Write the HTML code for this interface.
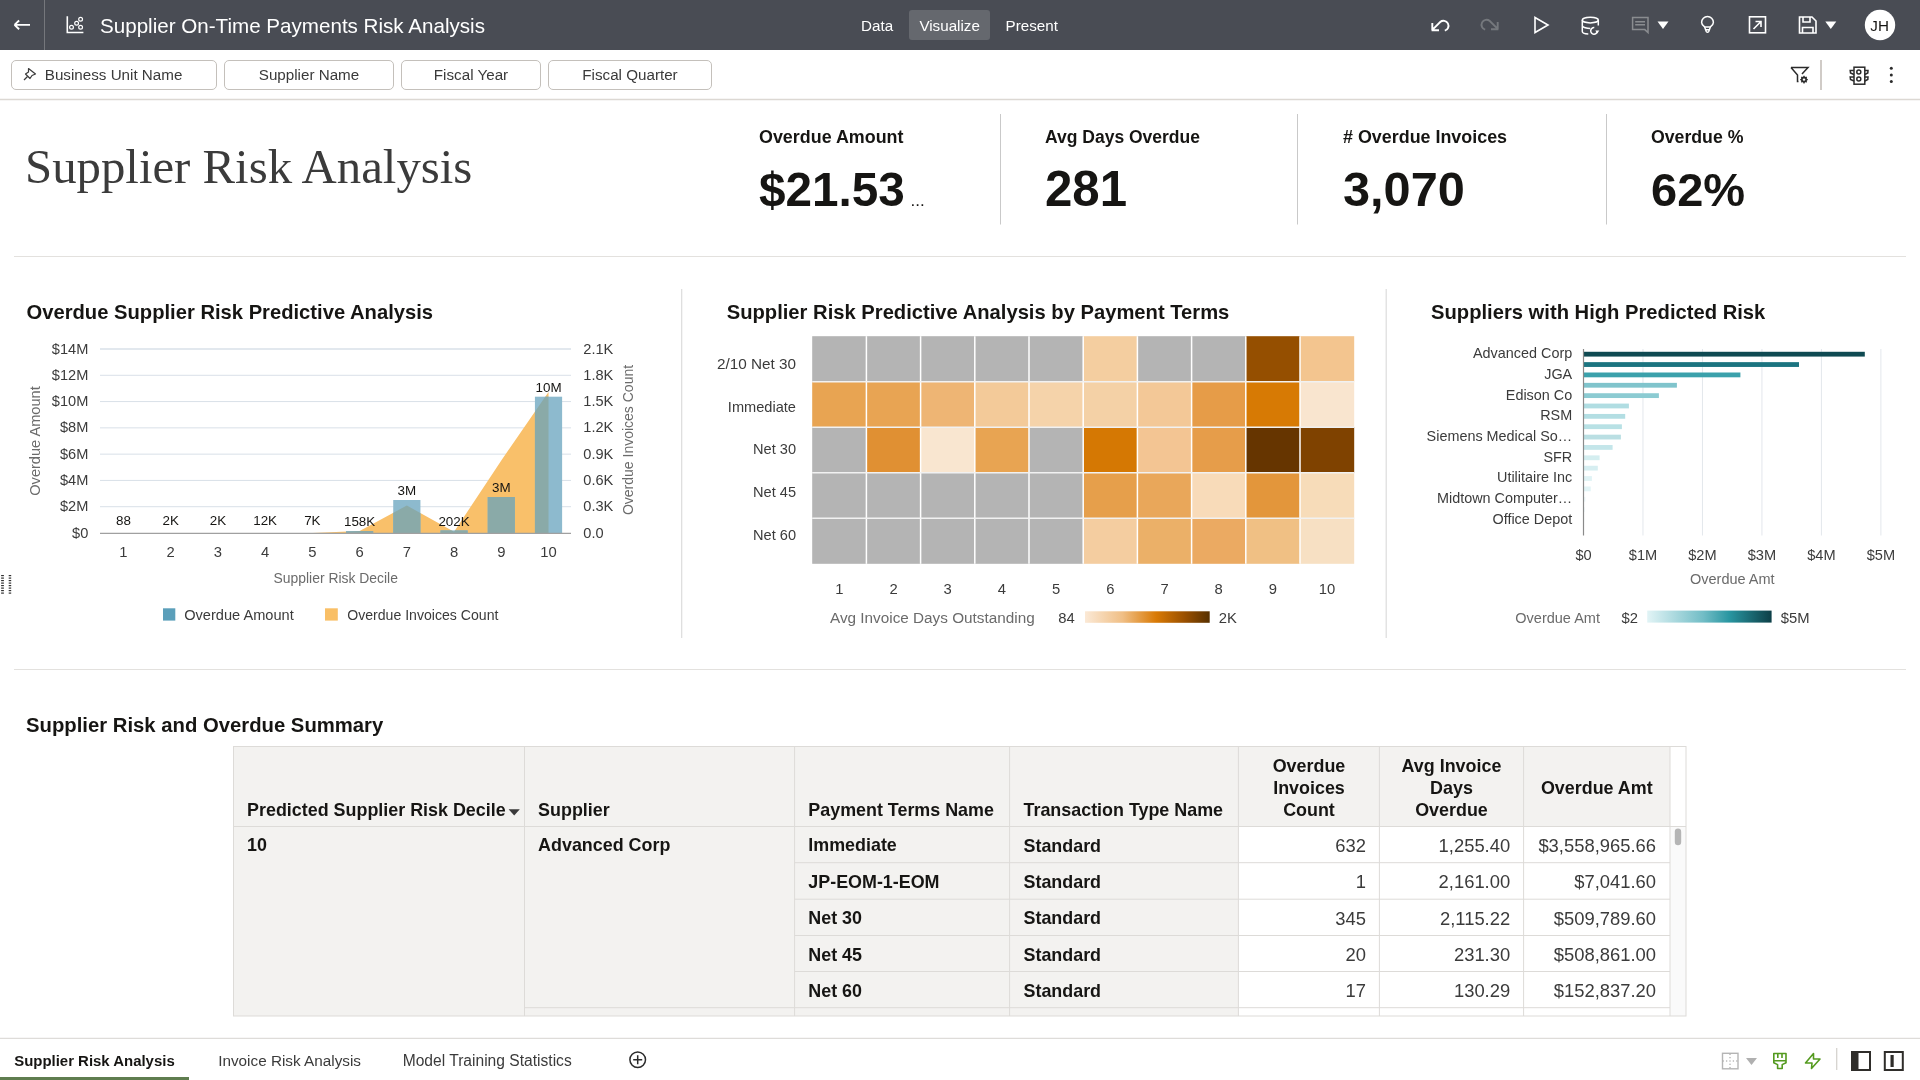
<!DOCTYPE html>
<html><head><meta charset="utf-8"><title>Supplier On-Time Payments Risk Analysis</title>
<style>html,body{margin:0;padding:0;width:1920px;height:1080px;overflow:hidden;background:#fff;font-family:"Liberation Sans",sans-serif;}
svg text{font-family:"Liberation Sans",sans-serif;}</style></head>
<body>
<svg width="1920" height="1080" viewBox="0 0 1920 1080" style="position:absolute;left:0;top:0;display:block;will-change:transform"><rect x="0" y="0" width="1920" height="1080" fill="#ffffff" /><rect x="0" y="0" width="1920" height="50" fill="#494c54" /><line x1="44.5" y1="0" x2="44.5" y2="50" stroke="#75777c" stroke-width="1" /><path d="M14.8 24.9 H30 M14.5 24.9 L19.1 20.5 M14.5 24.9 L19.1 29.3" stroke="#fff" stroke-width="1.9" fill="none" stroke-linecap="butt"/><path d="M67.3 16.3 V32.5 H83.4" stroke="#fff" stroke-width="1.6" fill="none"/><circle cx="71.5" cy="27.2" r="1.9" stroke="#fff" stroke-width="1.2" fill="none"/><circle cx="76.6" cy="23.2" r="1.9" stroke="#fff" stroke-width="1.2" fill="none"/><circle cx="80.6" cy="19.2" r="1.9" stroke="#fff" stroke-width="1.2" fill="none"/><circle cx="80.6" cy="27.2" r="1.9" stroke="#fff" stroke-width="1.2" fill="none"/><text x="100" y="33.3" font-size="20.6" font-weight="400" fill="#ffffff" text-anchor="start" font-family="'Liberation Sans', sans-serif" >Supplier On-Time Payments Risk Analysis</text><rect x="909" y="10" width="81" height="30" fill="#65686e" rx="3"/><text x="861" y="30.6" font-size="15.2" font-weight="400" fill="#ffffff" text-anchor="start" font-family="'Liberation Sans', sans-serif" >Data</text><text x="919.4" y="30.6" font-size="15.2" font-weight="400" fill="#ffffff" text-anchor="start" font-family="'Liberation Sans', sans-serif" >Visualize</text><text x="1005.6" y="30.6" font-size="15.2" font-weight="400" fill="#ffffff" text-anchor="start" font-family="'Liberation Sans', sans-serif" >Present</text><path d="M1444.8 30.6 A5 5 0 1 0 1440.2 22 L1432.6 29.6 M1432.3 30.3 V23 M1431.6 30.3 H1439" stroke="#fff" stroke-width="1.9" fill="none"/><path d="M1485.2 29.6 A5 5 0 1 1 1489.8 21 L1497.4 28.6 M1497.7 29.3 V22 M1498.4 29.3 H1491" stroke="#75787d" stroke-width="1.9" fill="none"/><path d="M1535 17.5 L1548 25 L1535 32.5 Z" stroke="#fff" stroke-width="1.6" fill="none" stroke-linejoin="miter"/><g stroke="#fff" stroke-width="1.5" fill="none" transform="translate(0.3,0.6)"><ellipse cx="1590" cy="19.5" rx="8" ry="2.8"/><path d="M1582 19.5 V31 Q1582 33.3 1588 33.5 M1598 19.5 V25 M1582 25.5 Q1584 27.8 1590 28"/><path d="M1597 30.5 A3.3 3.3 0 1 1 1594 27"/></g><path d="M1595.3 30.6 L1599.3 30.6 L1597.3 33.6 Z" fill="#fff"/><g stroke="#8a8c90" stroke-width="1.5" fill="none"><path d="M1632.6 17.6 H1648 V32.6 L1644.8 29.6 H1632.6 Z"/><path d="M1635.2 21.7 H1645 M1635.2 24.8 H1645"/></g><path d="M1657.5 21.5 H1668.5 L1663 29 Z" fill="#fff"/><g stroke="#fff" stroke-width="1.5" fill="none" stroke-linejoin="round"><path d="M1704.6 26.9 C1702.2 25 1701.6 23.6 1701.6 22.4 A5.9 5.9 0 0 1 1713.4 22.4 C1713.4 23.6 1712.8 25 1710.4 26.9 Z"/><path d="M1704.6 26.9 L1706.3 31.6 Q1707.5 33.1 1708.7 31.6 L1710.4 26.9 M1705.6 29.8 H1709.4"/></g><g stroke="#fff" stroke-width="1.6" fill="none"><rect x="1749.5" y="16.8" width="16" height="16"/><path d="M1753.5 29 L1761 21.5 M1755.5 21.5 H1761 V27"/></g><g stroke="#fff" stroke-width="1.6" fill="none"><path d="M1799.5 17 H1812 L1816 21 V33 H1799.5 Z"/><path d="M1803 17 V22 H1810 V17 M1802.5 33 V27.5 H1813 V33"/></g><path d="M1825.3 21.5 H1836.3 L1830.8 29 Z" fill="#fff"/><circle cx="1880" cy="25" r="15.2" fill="#ffffff"/><text x="1879.6" y="30.7" font-size="15.2" font-weight="400" fill="#161513" text-anchor="middle" font-family="'Liberation Sans', sans-serif" >JH</text><rect x="11.5" y="60.5" width="205" height="29" rx="4.5" fill="#fff" stroke="#c4c0bb" stroke-width="1"/><text x="44.8" y="80.3" font-size="15.2" font-weight="400" fill="#3a3a3a" text-anchor="start" font-family="'Liberation Sans', sans-serif" >Business Unit Name</text><rect x="224.5" y="60.5" width="169" height="29" rx="4.5" fill="#fff" stroke="#c4c0bb" stroke-width="1"/><text x="309.0" y="80.3" font-size="15.2" font-weight="400" fill="#3a3a3a" text-anchor="middle" font-family="'Liberation Sans', sans-serif" >Supplier Name</text><rect x="401.5" y="60.5" width="139" height="29" rx="4.5" fill="#fff" stroke="#c4c0bb" stroke-width="1"/><text x="471.0" y="80.3" font-size="15.2" font-weight="400" fill="#3a3a3a" text-anchor="middle" font-family="'Liberation Sans', sans-serif" >Fiscal Year</text><rect x="548.5" y="60.5" width="163" height="29" rx="4.5" fill="#fff" stroke="#c4c0bb" stroke-width="1"/><text x="630.0" y="80.3" font-size="15.2" font-weight="400" fill="#3a3a3a" text-anchor="middle" font-family="'Liberation Sans', sans-serif" >Fiscal Quarter</text><g stroke="#3a3a3a" stroke-width="1.2" fill="none" stroke-linejoin="round"><path d="M28.5 68.5 L35.5 74 L32 75.5 L30 78.5 L25.5 74 L28.5 72 Z"/><path d="M27.5 76.5 L24 80"/></g><g stroke="#2b2b2b" stroke-width="1.5" fill="none"><path d="M1791 67.5 H1808 L1802 74 M1791 67.5 L1797.5 75 V81.5 L1798.5 81.5"/><circle cx="1804" cy="79.6" r="2.3"/></g><g stroke="#2b2b2b" stroke-width="1.3"><line x1="1804" y1="79.6" x2="1807.8" y2="79.6"/><line x1="1804" y1="79.6" x2="1806.687007551061" y2="82.28700398595551"/><line x1="1804" y1="79.6" x2="1804.0000050418207" y2="83.39999999999665"/><line x1="1804" y1="79.6" x2="1801.3129995791548" y2="82.28701111616186"/><line x1="1804" y1="79.6" x2="1800.2000000000135" y2="79.60001008364121"/><line x1="1804" y1="79.6" x2="1801.312985318742" y2="76.91300314426975"/><line x1="1804" y1="79.6" x2="1803.999984874538" y2="75.8000000000301"/><line x1="1804" y1="79.6" x2="1806.6869932906104" y2="76.9129817536507"/></g><circle cx="1804" cy="79.6" r="1.2" fill="#fff"/><line x1="1821" y1="60" x2="1821" y2="90" stroke="#d0cbc7" stroke-width="2" /><g stroke="#2b2b2b" stroke-width="1.5" fill="none"><rect x="1854" y="67.2" width="10.8" height="17"/><circle cx="1858.8" cy="72" r="2"/><circle cx="1858.8" cy="79" r="2"/><path d="M1854 70.5 L1850.2 70.5 L1850.5 73 L1854 74.5 M1854 77 L1850.2 77 L1850.5 79.5 L1854 81 M1864.8 70.5 L1868 70.5 L1867.8 73 L1864.8 74.5 M1864.8 77 L1868 77 L1867.8 79.5 L1864.8 81"/></g><circle cx="1891.3" cy="68.3" r="1.5" fill="#2b2b2b"/><circle cx="1891.3" cy="75" r="1.5" fill="#2b2b2b"/><circle cx="1891.3" cy="81.6" r="1.5" fill="#2b2b2b"/><line x1="0" y1="99.5" x2="1920" y2="99.5" stroke="#dcd8d3" stroke-width="1.5" /><text x="25" y="182.5" font-size="48.8" font-weight="400" fill="#3b3b3b" text-anchor="start" style="font-family:'Liberation Serif',serif" >Supplier Risk Analysis</text><text x="759" y="143.3" font-size="17.9" font-weight="700" fill="#161513" text-anchor="start" font-family="'Liberation Sans', sans-serif" >Overdue Amount</text><text x="759" y="206.3" font-size="47.7" font-weight="700" fill="#161513" text-anchor="start" font-family="'Liberation Sans', sans-serif" >$21.53</text><text x="1045" y="143.3" font-size="17.5" font-weight="700" fill="#161513" text-anchor="start" font-family="'Liberation Sans', sans-serif" >Avg Days Overdue</text><text x="1045" y="206.3" font-size="49.2" font-weight="700" fill="#161513" text-anchor="start" font-family="'Liberation Sans', sans-serif" >281</text><text x="1343" y="143.3" font-size="17.9" font-weight="700" fill="#161513" text-anchor="start" font-family="'Liberation Sans', sans-serif" ># Overdue Invoices</text><text x="1343" y="206.3" font-size="48.7" font-weight="700" fill="#161513" text-anchor="start" font-family="'Liberation Sans', sans-serif" >3,070</text><text x="1651" y="143.3" font-size="17.7" font-weight="700" fill="#161513" text-anchor="start" font-family="'Liberation Sans', sans-serif" >Overdue %</text><text x="1651" y="206.3" font-size="47.0" font-weight="700" fill="#161513" text-anchor="start" font-family="'Liberation Sans', sans-serif" >62%</text><text x="910.5" y="206.3" font-size="17" font-weight="400" fill="#161513" text-anchor="start" font-family="'Liberation Sans', sans-serif" >...</text><line x1="1000.5" y1="114" x2="1000.5" y2="224.5" stroke="#c9c9c9" stroke-width="1" /><line x1="1297.5" y1="114" x2="1297.5" y2="224.5" stroke="#c9c9c9" stroke-width="1" /><line x1="1606.5" y1="114" x2="1606.5" y2="224.5" stroke="#c9c9c9" stroke-width="1" /><line x1="14" y1="256.5" x2="1906" y2="256.5" stroke="#e3e1de" stroke-width="1.2" /><text x="26.5" y="319.2" font-size="20.2" font-weight="700" fill="#161513" text-anchor="start" font-family="'Liberation Sans', sans-serif" >Overdue Supplier Risk Predictive Analysis</text><text x="88.3" y="537.6" font-size="14.6" font-weight="400" fill="#3b3b3b" text-anchor="end" font-family="'Liberation Sans', sans-serif" >$0</text><text x="583.3" y="537.6" font-size="14.6" font-weight="400" fill="#3b3b3b" text-anchor="start" font-family="'Liberation Sans', sans-serif" >0.0</text><line x1="100" y1="506.7142857142857" x2="571" y2="506.7142857142857" stroke="#d9e0e8" stroke-width="1" /><text x="88.3" y="511.31428571428575" font-size="14.6" font-weight="400" fill="#3b3b3b" text-anchor="end" font-family="'Liberation Sans', sans-serif" >$2M</text><text x="583.3" y="511.31428571428575" font-size="14.6" font-weight="400" fill="#3b3b3b" text-anchor="start" font-family="'Liberation Sans', sans-serif" >0.3K</text><line x1="100" y1="480.42857142857144" x2="571" y2="480.42857142857144" stroke="#d9e0e8" stroke-width="1" /><text x="88.3" y="485.02857142857147" font-size="14.6" font-weight="400" fill="#3b3b3b" text-anchor="end" font-family="'Liberation Sans', sans-serif" >$4M</text><text x="583.3" y="485.02857142857147" font-size="14.6" font-weight="400" fill="#3b3b3b" text-anchor="start" font-family="'Liberation Sans', sans-serif" >0.6K</text><line x1="100" y1="454.1428571428571" x2="571" y2="454.1428571428571" stroke="#d9e0e8" stroke-width="1" /><text x="88.3" y="458.74285714285713" font-size="14.6" font-weight="400" fill="#3b3b3b" text-anchor="end" font-family="'Liberation Sans', sans-serif" >$6M</text><text x="583.3" y="458.74285714285713" font-size="14.6" font-weight="400" fill="#3b3b3b" text-anchor="start" font-family="'Liberation Sans', sans-serif" >0.9K</text><line x1="100" y1="427.8571428571429" x2="571" y2="427.8571428571429" stroke="#d9e0e8" stroke-width="1" /><text x="88.3" y="432.4571428571429" font-size="14.6" font-weight="400" fill="#3b3b3b" text-anchor="end" font-family="'Liberation Sans', sans-serif" >$8M</text><text x="583.3" y="432.4571428571429" font-size="14.6" font-weight="400" fill="#3b3b3b" text-anchor="start" font-family="'Liberation Sans', sans-serif" >1.2K</text><line x1="100" y1="401.57142857142856" x2="571" y2="401.57142857142856" stroke="#d9e0e8" stroke-width="1" /><text x="88.3" y="406.1714285714286" font-size="14.6" font-weight="400" fill="#3b3b3b" text-anchor="end" font-family="'Liberation Sans', sans-serif" >$10M</text><text x="583.3" y="406.1714285714286" font-size="14.6" font-weight="400" fill="#3b3b3b" text-anchor="start" font-family="'Liberation Sans', sans-serif" >1.5K</text><line x1="100" y1="375.2857142857143" x2="571" y2="375.2857142857143" stroke="#d9e0e8" stroke-width="1" /><text x="88.3" y="379.8857142857143" font-size="14.6" font-weight="400" fill="#3b3b3b" text-anchor="end" font-family="'Liberation Sans', sans-serif" >$12M</text><text x="583.3" y="379.8857142857143" font-size="14.6" font-weight="400" fill="#3b3b3b" text-anchor="start" font-family="'Liberation Sans', sans-serif" >1.8K</text><line x1="100" y1="349.0" x2="571" y2="349.0" stroke="#d9e0e8" stroke-width="1.3" /><text x="88.3" y="353.6" font-size="14.6" font-weight="400" fill="#3b3b3b" text-anchor="end" font-family="'Liberation Sans', sans-serif" >$14M</text><text x="583.3" y="353.6" font-size="14.6" font-weight="400" fill="#3b3b3b" text-anchor="start" font-family="'Liberation Sans', sans-serif" >2.1K</text><defs><clipPath id="areaclip"><polygon points="100.00,533.00 123.45,533.00 170.68,533.00 217.91,533.00 265.14,533.00 312.37,533.00 359.60,531.00 406.83,505.50 454.06,531.80 501.29,460.50 548.52,392.00 548.52,533.00"/></clipPath></defs><polygon points="100.00,533.00 123.45,533.00 170.68,533.00 217.91,533.00 265.14,533.00 312.37,533.00 359.60,531.00 406.83,505.50 454.06,531.80 501.29,460.50 548.52,392.00 548.52,533.00" fill="#f9c06a"/><g fill="#8dbace"><rect x="346.00" y="531" width="27.2" height="2.00"/><rect x="393.23" y="500" width="27.2" height="33.00"/><rect x="440.46" y="530.4" width="27.2" height="2.60"/><rect x="487.69" y="497" width="27.2" height="36.00"/><rect x="534.92" y="396.7" width="27.2" height="136.30"/></g><g fill="#8aaaa8" clip-path="url(#areaclip)"><rect x="346.00" y="531" width="27.2" height="2.00"/><rect x="393.23" y="500" width="27.2" height="33.00"/><rect x="440.46" y="530.4" width="27.2" height="2.60"/><rect x="487.69" y="497" width="27.2" height="36.00"/><rect x="534.92" y="396.7" width="27.2" height="136.30"/></g><line x1="100" y1="533.3" x2="571" y2="533.3" stroke="#a0a0a0" stroke-width="1.3" /><text x="123.45" y="525" font-size="13.4" font-weight="400" fill="#161513" text-anchor="middle" font-family="'Liberation Sans', sans-serif" >88</text><text x="123.45" y="556.7" font-size="14.8" font-weight="400" fill="#3b3b3b" text-anchor="middle" font-family="'Liberation Sans', sans-serif" >1</text><text x="170.68" y="525" font-size="13.4" font-weight="400" fill="#161513" text-anchor="middle" font-family="'Liberation Sans', sans-serif" >2K</text><text x="170.68" y="556.7" font-size="14.8" font-weight="400" fill="#3b3b3b" text-anchor="middle" font-family="'Liberation Sans', sans-serif" >2</text><text x="217.91" y="525" font-size="13.4" font-weight="400" fill="#161513" text-anchor="middle" font-family="'Liberation Sans', sans-serif" >2K</text><text x="217.91" y="556.7" font-size="14.8" font-weight="400" fill="#3b3b3b" text-anchor="middle" font-family="'Liberation Sans', sans-serif" >3</text><text x="265.14" y="525" font-size="13.4" font-weight="400" fill="#161513" text-anchor="middle" font-family="'Liberation Sans', sans-serif" >12K</text><text x="265.14" y="556.7" font-size="14.8" font-weight="400" fill="#3b3b3b" text-anchor="middle" font-family="'Liberation Sans', sans-serif" >4</text><text x="312.37" y="525" font-size="13.4" font-weight="400" fill="#161513" text-anchor="middle" font-family="'Liberation Sans', sans-serif" >7K</text><text x="312.37" y="556.7" font-size="14.8" font-weight="400" fill="#3b3b3b" text-anchor="middle" font-family="'Liberation Sans', sans-serif" >5</text><text x="359.59999999999997" y="525.6" font-size="13.4" font-weight="400" fill="#161513" text-anchor="middle" font-family="'Liberation Sans', sans-serif" >158K</text><text x="359.59999999999997" y="556.7" font-size="14.8" font-weight="400" fill="#3b3b3b" text-anchor="middle" font-family="'Liberation Sans', sans-serif" >6</text><text x="406.83" y="495" font-size="13.4" font-weight="400" fill="#161513" text-anchor="middle" font-family="'Liberation Sans', sans-serif" >3M</text><text x="406.83" y="556.7" font-size="14.8" font-weight="400" fill="#3b3b3b" text-anchor="middle" font-family="'Liberation Sans', sans-serif" >7</text><text x="454.05999999999995" y="525.6" font-size="13.4" font-weight="400" fill="#161513" text-anchor="middle" font-family="'Liberation Sans', sans-serif" >202K</text><text x="454.05999999999995" y="556.7" font-size="14.8" font-weight="400" fill="#3b3b3b" text-anchor="middle" font-family="'Liberation Sans', sans-serif" >8</text><text x="501.28999999999996" y="492" font-size="13.4" font-weight="400" fill="#161513" text-anchor="middle" font-family="'Liberation Sans', sans-serif" >3M</text><text x="501.28999999999996" y="556.7" font-size="14.8" font-weight="400" fill="#3b3b3b" text-anchor="middle" font-family="'Liberation Sans', sans-serif" >9</text><text x="548.52" y="392" font-size="13.4" font-weight="400" fill="#161513" text-anchor="middle" font-family="'Liberation Sans', sans-serif" >10M</text><text x="548.52" y="556.7" font-size="14.8" font-weight="400" fill="#3b3b3b" text-anchor="middle" font-family="'Liberation Sans', sans-serif" >10</text><text x="0" y="0" font-size="14.6" font-weight="400" fill="#6b6b6b" text-anchor="middle" font-family="'Liberation Sans', sans-serif" transform="translate(39.6 441) rotate(-90)">Overdue Amount</text><text x="0" y="0" font-size="14" font-weight="400" fill="#6b6b6b" text-anchor="middle" font-family="'Liberation Sans', sans-serif" transform="translate(633.3 440) rotate(-90)">Overdue Invoices Count</text><text x="273.6" y="582.5" font-size="13.9" font-weight="400" fill="#6b6b6b" text-anchor="start" font-family="'Liberation Sans', sans-serif" >Supplier Risk Decile</text><rect x="163" y="608.3" width="12.3" height="12.3" fill="#5b9fba" /><text x="184.2" y="620.4" font-size="14.6" font-weight="400" fill="#3b3b3b" text-anchor="start" font-family="'Liberation Sans', sans-serif" >Overdue Amount</text><rect x="325" y="608.3" width="12.8" height="12.3" fill="#f9bf66" /><text x="347.2" y="620.4" font-size="14.1" font-weight="400" fill="#3b3b3b" text-anchor="start" font-family="'Liberation Sans', sans-serif" >Overdue Invoices Count</text><rect x="1.1" y="575.0" width="2.8" height="1.2" fill="#333" /><rect x="8.7" y="575.0" width="2.5" height="1.2" fill="#333" /><rect x="1.1" y="577.5" width="2.8" height="1.2" fill="#333" /><rect x="8.7" y="577.5" width="2.5" height="1.2" fill="#333" /><rect x="1.1" y="580.0" width="2.8" height="1.2" fill="#333" /><rect x="8.7" y="580.0" width="2.5" height="1.2" fill="#333" /><rect x="1.1" y="582.5" width="2.8" height="1.2" fill="#333" /><rect x="8.7" y="582.5" width="2.5" height="1.2" fill="#333" /><rect x="1.1" y="585.0" width="2.8" height="1.2" fill="#333" /><rect x="8.7" y="585.0" width="2.5" height="1.2" fill="#333" /><rect x="1.1" y="587.5" width="2.8" height="1.2" fill="#333" /><rect x="8.7" y="587.5" width="2.5" height="1.2" fill="#333" /><rect x="1.1" y="590.0" width="2.8" height="1.2" fill="#333" /><rect x="8.7" y="590.0" width="2.5" height="1.2" fill="#333" /><rect x="1.1" y="592.5" width="2.8" height="1.2" fill="#333" /><rect x="8.7" y="592.5" width="2.5" height="1.2" fill="#333" /><line x1="681.7" y1="289" x2="681.7" y2="638" stroke="#dcdcdc" stroke-width="1.2" /><line x1="1386.2" y1="289" x2="1386.2" y2="638" stroke="#dcdcdc" stroke-width="1.2" /><text x="726.7" y="319.2" font-size="20.2" font-weight="700" fill="#161513" text-anchor="start" font-family="'Liberation Sans', sans-serif" >Supplier Risk Predictive Analysis by Payment Terms</text><rect x="812.20" y="336.20" width="54.20" height="45.52" fill="#b4b4b4" /><rect x="866.40" y="336.20" width="54.20" height="45.52" fill="#b4b4b4" /><rect x="920.60" y="336.20" width="54.20" height="45.52" fill="#b4b4b4" /><rect x="974.80" y="336.20" width="54.20" height="45.52" fill="#b4b4b4" /><rect x="1029.00" y="336.20" width="54.20" height="45.52" fill="#b4b4b4" /><rect x="1083.20" y="336.20" width="54.20" height="45.52" fill="#f4cea0" /><rect x="1137.40" y="336.20" width="54.20" height="45.52" fill="#b4b4b4" /><rect x="1191.60" y="336.20" width="54.20" height="45.52" fill="#b4b4b4" /><rect x="1245.80" y="336.20" width="54.20" height="45.52" fill="#954f00" /><rect x="1300.00" y="336.20" width="54.20" height="45.52" fill="#f3c58f" /><rect x="812.20" y="381.72" width="54.20" height="45.52" fill="#e8a452" /><rect x="866.40" y="381.72" width="54.20" height="45.52" fill="#e8a453" /><rect x="920.60" y="381.72" width="54.20" height="45.52" fill="#eeb574" /><rect x="974.80" y="381.72" width="54.20" height="45.52" fill="#f3ca99" /><rect x="1029.00" y="381.72" width="54.20" height="45.52" fill="#f5d3aa" /><rect x="1083.20" y="381.72" width="54.20" height="45.52" fill="#f4d1a6" /><rect x="1137.40" y="381.72" width="54.20" height="45.52" fill="#f3c897" /><rect x="1191.60" y="381.72" width="54.20" height="45.52" fill="#e69c48" /><rect x="1245.80" y="381.72" width="54.20" height="45.52" fill="#d77a04" /><rect x="1300.00" y="381.72" width="54.20" height="45.52" fill="#f9e5cf" /><rect x="812.20" y="427.24" width="54.20" height="45.52" fill="#b4b4b4" /><rect x="866.40" y="427.24" width="54.20" height="45.52" fill="#e09033" /><rect x="920.60" y="427.24" width="54.20" height="45.52" fill="#f9e6d0" /><rect x="974.80" y="427.24" width="54.20" height="45.52" fill="#e8a452" /><rect x="1029.00" y="427.24" width="54.20" height="45.52" fill="#b4b4b4" /><rect x="1083.20" y="427.24" width="54.20" height="45.52" fill="#d57803" /><rect x="1137.40" y="427.24" width="54.20" height="45.52" fill="#f3c593" /><rect x="1191.60" y="427.24" width="54.20" height="45.52" fill="#e69d4a" /><rect x="1245.80" y="427.24" width="54.20" height="45.52" fill="#663500" /><rect x="1300.00" y="427.24" width="54.20" height="45.52" fill="#7f4200" /><rect x="812.20" y="472.76" width="54.20" height="45.52" fill="#b4b4b4" /><rect x="866.40" y="472.76" width="54.20" height="45.52" fill="#b4b4b4" /><rect x="920.60" y="472.76" width="54.20" height="45.52" fill="#b4b4b4" /><rect x="974.80" y="472.76" width="54.20" height="45.52" fill="#b4b4b4" /><rect x="1029.00" y="472.76" width="54.20" height="45.52" fill="#b4b4b4" /><rect x="1083.20" y="472.76" width="54.20" height="45.52" fill="#e69f4b" /><rect x="1137.40" y="472.76" width="54.20" height="45.52" fill="#e9a75a" /><rect x="1191.60" y="472.76" width="54.20" height="45.52" fill="#f8dbb9" /><rect x="1245.80" y="472.76" width="54.20" height="45.52" fill="#e3963b" /><rect x="1300.00" y="472.76" width="54.20" height="45.52" fill="#f7dcb9" /><rect x="812.20" y="518.28" width="54.20" height="45.52" fill="#b4b4b4" /><rect x="866.40" y="518.28" width="54.20" height="45.52" fill="#b4b4b4" /><rect x="920.60" y="518.28" width="54.20" height="45.52" fill="#b4b4b4" /><rect x="974.80" y="518.28" width="54.20" height="45.52" fill="#b4b4b4" /><rect x="1029.00" y="518.28" width="54.20" height="45.52" fill="#b4b4b4" /><rect x="1083.20" y="518.28" width="54.20" height="45.52" fill="#f4cda0" /><rect x="1137.40" y="518.28" width="54.20" height="45.52" fill="#ebb068" /><rect x="1191.60" y="518.28" width="54.20" height="45.52" fill="#ebaa62" /><rect x="1245.80" y="518.28" width="54.20" height="45.52" fill="#f0c084" /><rect x="1300.00" y="518.28" width="54.20" height="45.52" fill="#f7e0c3" /><line x1="866.40" y1="336.2" x2="866.40" y2="563.8" stroke="#ffffff" stroke-width="1.5" /><line x1="920.60" y1="336.2" x2="920.60" y2="563.8" stroke="#ffffff" stroke-width="1.5" /><line x1="974.80" y1="336.2" x2="974.80" y2="563.8" stroke="#ffffff" stroke-width="1.5" /><line x1="1029.00" y1="336.2" x2="1029.00" y2="563.8" stroke="#ffffff" stroke-width="1.5" /><line x1="1083.20" y1="336.2" x2="1083.20" y2="563.8" stroke="#ffffff" stroke-width="1.5" /><line x1="1137.40" y1="336.2" x2="1137.40" y2="563.8" stroke="#ffffff" stroke-width="1.5" /><line x1="1191.60" y1="336.2" x2="1191.60" y2="563.8" stroke="#ffffff" stroke-width="1.5" /><line x1="1245.80" y1="336.2" x2="1245.80" y2="563.8" stroke="#ffffff" stroke-width="1.5" /><line x1="1300.00" y1="336.2" x2="1300.00" y2="563.8" stroke="#ffffff" stroke-width="1.5" /><line x1="812.2" y1="381.72" x2="1354.2" y2="381.72" stroke="#f1f1f1" stroke-width="1.6" /><line x1="812.2" y1="427.24" x2="1354.2" y2="427.24" stroke="#f1f1f1" stroke-width="1.6" /><line x1="812.2" y1="472.76" x2="1354.2" y2="472.76" stroke="#f1f1f1" stroke-width="1.6" /><line x1="812.2" y1="518.28" x2="1354.2" y2="518.28" stroke="#f1f1f1" stroke-width="1.6" /><text x="796" y="369.3" font-size="15.3" font-weight="400" fill="#3b3b3b" text-anchor="end" font-family="'Liberation Sans', sans-serif" >2/10 Net 30</text><text x="796" y="412.2" font-size="14.6" font-weight="400" fill="#3b3b3b" text-anchor="end" font-family="'Liberation Sans', sans-serif" >Immediate</text><text x="796" y="453.8" font-size="14.6" font-weight="400" fill="#3b3b3b" text-anchor="end" font-family="'Liberation Sans', sans-serif" >Net 30</text><text x="796" y="496.7" font-size="14.6" font-weight="400" fill="#3b3b3b" text-anchor="end" font-family="'Liberation Sans', sans-serif" >Net 45</text><text x="796" y="540" font-size="14.6" font-weight="400" fill="#3b3b3b" text-anchor="end" font-family="'Liberation Sans', sans-serif" >Net 60</text><text x="839.30" y="594.2" font-size="14.8" font-weight="400" fill="#3b3b3b" text-anchor="middle" font-family="'Liberation Sans', sans-serif" >1</text><text x="893.50" y="594.2" font-size="14.8" font-weight="400" fill="#3b3b3b" text-anchor="middle" font-family="'Liberation Sans', sans-serif" >2</text><text x="947.70" y="594.2" font-size="14.8" font-weight="400" fill="#3b3b3b" text-anchor="middle" font-family="'Liberation Sans', sans-serif" >3</text><text x="1001.90" y="594.2" font-size="14.8" font-weight="400" fill="#3b3b3b" text-anchor="middle" font-family="'Liberation Sans', sans-serif" >4</text><text x="1056.10" y="594.2" font-size="14.8" font-weight="400" fill="#3b3b3b" text-anchor="middle" font-family="'Liberation Sans', sans-serif" >5</text><text x="1110.30" y="594.2" font-size="14.8" font-weight="400" fill="#3b3b3b" text-anchor="middle" font-family="'Liberation Sans', sans-serif" >6</text><text x="1164.50" y="594.2" font-size="14.8" font-weight="400" fill="#3b3b3b" text-anchor="middle" font-family="'Liberation Sans', sans-serif" >7</text><text x="1218.70" y="594.2" font-size="14.8" font-weight="400" fill="#3b3b3b" text-anchor="middle" font-family="'Liberation Sans', sans-serif" >8</text><text x="1272.90" y="594.2" font-size="14.8" font-weight="400" fill="#3b3b3b" text-anchor="middle" font-family="'Liberation Sans', sans-serif" >9</text><text x="1327.10" y="594.2" font-size="14.8" font-weight="400" fill="#3b3b3b" text-anchor="middle" font-family="'Liberation Sans', sans-serif" >10</text><text x="830" y="622.5" font-size="15.3" font-weight="400" fill="#6b6b6b" text-anchor="start" font-family="'Liberation Sans', sans-serif" >Avg Invoice Days Outstanding</text><text x="1058.3" y="622.8" font-size="14.8" font-weight="400" fill="#3b3b3b" text-anchor="start" font-family="'Liberation Sans', sans-serif" >84</text><defs><linearGradient id="hg" x1="0" x2="1" y1="0" y2="0"><stop offset="0" stop-color="#fbe9d6"/><stop offset="0.3" stop-color="#f0bf86"/><stop offset="0.57" stop-color="#d97a05"/><stop offset="0.8" stop-color="#9a5000"/><stop offset="1" stop-color="#573000"/></linearGradient></defs><rect x="1085" y="611.3" width="124.7" height="11.5" fill="url(#hg)" /><text x="1218.8" y="622.8" font-size="14.8" font-weight="400" fill="#3b3b3b" text-anchor="start" font-family="'Liberation Sans', sans-serif" >2K</text><text x="1431" y="319.2" font-size="20.2" font-weight="700" fill="#161513" text-anchor="start" font-family="'Liberation Sans', sans-serif" >Suppliers with High Predicted Risk</text><line x1="1642.98" y1="349" x2="1642.98" y2="535.5" stroke="#e3e7ec" stroke-width="1" /><line x1="1702.46" y1="349" x2="1702.46" y2="535.5" stroke="#e3e7ec" stroke-width="1" /><line x1="1761.94" y1="349" x2="1761.94" y2="535.5" stroke="#e3e7ec" stroke-width="1" /><line x1="1821.42" y1="349" x2="1821.42" y2="535.5" stroke="#e3e7ec" stroke-width="1" /><line x1="1880.90" y1="349" x2="1880.90" y2="535.5" stroke="#e3e7ec" stroke-width="1" /><rect x="1583.5" y="351.78" width="281.30" height="4.8" fill="#0f4a52" /><rect x="1583.5" y="362.14" width="215.50" height="4.8" fill="#1b7480" /><rect x="1583.5" y="372.50" width="156.90" height="4.8" fill="#3ba1ab" /><rect x="1583.5" y="382.86" width="93.40" height="4.8" fill="#80c4cc" /><rect x="1583.5" y="393.23" width="75.40" height="4.8" fill="#8ccbd2" /><rect x="1583.5" y="403.59" width="45.40" height="4.8" fill="#b0dde2" /><rect x="1583.5" y="413.95" width="41.70" height="4.8" fill="#b3dee3" /><rect x="1583.5" y="424.31" width="38.40" height="4.8" fill="#b8e1e5" /><rect x="1583.5" y="434.67" width="37.40" height="4.8" fill="#badfe3" /><rect x="1583.5" y="445.03" width="29.10" height="4.8" fill="#c4e6ea" /><rect x="1583.5" y="455.39" width="16.10" height="4.8" fill="#d4eef0" /><rect x="1583.5" y="465.75" width="14.30" height="4.8" fill="#d6eef1" /><rect x="1583.5" y="476.11" width="8.40" height="4.8" fill="#e0f3f5" /><rect x="1583.5" y="486.48" width="7.20" height="4.8" fill="#e2f4f6" /><rect x="1583.5" y="496.84" width="1.90" height="4.8" fill="#eef8f9" /><rect x="1583.5" y="507.20" width="1.30" height="4.8" fill="#f0f9fa" /><rect x="1583.5" y="517.56" width="0.70" height="4.8" fill="#f2fafb" /><rect x="1583.5" y="527.92" width="0.50" height="4.8" fill="#f2fafb" /><line x1="1583.5" y1="349" x2="1583.5" y2="535.5" stroke="#8a8a8a" stroke-width="1.2" /><text x="1572.2" y="358.08" font-size="14.4" font-weight="400" fill="#3b3b3b" text-anchor="end" font-family="'Liberation Sans', sans-serif" >Advanced Corp</text><text x="1572.2" y="378.80" font-size="14.4" font-weight="400" fill="#3b3b3b" text-anchor="end" font-family="'Liberation Sans', sans-serif" >JGA</text><text x="1572.2" y="399.52" font-size="14.4" font-weight="400" fill="#3b3b3b" text-anchor="end" font-family="'Liberation Sans', sans-serif" >Edison Co</text><text x="1572.2" y="420.25" font-size="14.4" font-weight="400" fill="#3b3b3b" text-anchor="end" font-family="'Liberation Sans', sans-serif" >RSM</text><text x="1572.2" y="440.97" font-size="14.4" font-weight="400" fill="#3b3b3b" text-anchor="end" font-family="'Liberation Sans', sans-serif" >Siemens Medical So…</text><text x="1572.2" y="461.69" font-size="14.4" font-weight="400" fill="#3b3b3b" text-anchor="end" font-family="'Liberation Sans', sans-serif" >SFR</text><text x="1572.2" y="482.41" font-size="14.4" font-weight="400" fill="#3b3b3b" text-anchor="end" font-family="'Liberation Sans', sans-serif" >Utilitaire Inc</text><text x="1572.2" y="503.14" font-size="14.4" font-weight="400" fill="#3b3b3b" text-anchor="end" font-family="'Liberation Sans', sans-serif" >Midtown Computer…</text><text x="1572.2" y="523.86" font-size="14.4" font-weight="400" fill="#3b3b3b" text-anchor="end" font-family="'Liberation Sans', sans-serif" >Office Depot</text><text x="1583.50" y="560.2" font-size="14.6" font-weight="400" fill="#3b3b3b" text-anchor="middle" font-family="'Liberation Sans', sans-serif" >$0</text><text x="1642.98" y="560.2" font-size="14.6" font-weight="400" fill="#3b3b3b" text-anchor="middle" font-family="'Liberation Sans', sans-serif" >$1M</text><text x="1702.46" y="560.2" font-size="14.6" font-weight="400" fill="#3b3b3b" text-anchor="middle" font-family="'Liberation Sans', sans-serif" >$2M</text><text x="1761.94" y="560.2" font-size="14.6" font-weight="400" fill="#3b3b3b" text-anchor="middle" font-family="'Liberation Sans', sans-serif" >$3M</text><text x="1821.42" y="560.2" font-size="14.6" font-weight="400" fill="#3b3b3b" text-anchor="middle" font-family="'Liberation Sans', sans-serif" >$4M</text><text x="1880.90" y="560.2" font-size="14.6" font-weight="400" fill="#3b3b3b" text-anchor="middle" font-family="'Liberation Sans', sans-serif" >$5M</text><text x="1690" y="584.2" font-size="14.5" font-weight="400" fill="#6b6b6b" text-anchor="start" font-family="'Liberation Sans', sans-serif" >Overdue Amt</text><text x="1515.3" y="622.6" font-size="14.5" font-weight="400" fill="#6b6b6b" text-anchor="start" font-family="'Liberation Sans', sans-serif" >Overdue Amt</text><text x="1621.5" y="622.8" font-size="14.8" font-weight="400" fill="#3b3b3b" text-anchor="start" font-family="'Liberation Sans', sans-serif" >$2</text><defs><linearGradient id="bg3" x1="0" x2="1" y1="0" y2="0"><stop offset="0" stop-color="#e2f4f6"/><stop offset="0.45" stop-color="#72bdc6"/><stop offset="0.66" stop-color="#2996a1"/><stop offset="1" stop-color="#0d3f47"/></linearGradient></defs><rect x="1647.2" y="610.6" width="124.4" height="12" fill="url(#bg3)" /><text x="1780.8" y="622.8" font-size="14.8" font-weight="400" fill="#3b3b3b" text-anchor="start" font-family="'Liberation Sans', sans-serif" >$5M</text><line x1="14" y1="669.5" x2="1906" y2="669.5" stroke="#e3e1de" stroke-width="1.2" /><text x="26" y="731.9" font-size="20.3" font-weight="700" fill="#161513" text-anchor="start" font-family="'Liberation Sans', sans-serif" >Supplier Risk and Overdue Summary</text><rect x="233.5" y="746.5" width="1452.5" height="269.5" fill="#ffffff" /><rect x="233.5" y="746.5" width="1436.5" height="80.0" fill="#f3f2f0" /><rect x="233.5" y="826.5" width="1004.9000000000001" height="189.5" fill="#f3f2f0" /><rect x="1670" y="826.5" width="16" height="189.5" fill="#fafafa" /><line x1="524.5" y1="746.5" x2="524.5" y2="1016" stroke="#dddbd8" stroke-width="1" /><line x1="794.6" y1="746.5" x2="794.6" y2="1016" stroke="#dddbd8" stroke-width="1" /><line x1="1009.6" y1="746.5" x2="1009.6" y2="1016" stroke="#dddbd8" stroke-width="1" /><line x1="1238.4" y1="746.5" x2="1238.4" y2="1016" stroke="#dddbd8" stroke-width="1" /><line x1="1379.4" y1="746.5" x2="1379.4" y2="1016" stroke="#dddbd8" stroke-width="1" /><line x1="1523.6" y1="746.5" x2="1523.6" y2="1016" stroke="#dddbd8" stroke-width="1" /><line x1="1670" y1="746.5" x2="1670" y2="1016" stroke="#dddbd8" stroke-width="1" /><line x1="233.5" y1="826.5" x2="1686" y2="826.5" stroke="#dddbd8" stroke-width="1" /><line x1="794.6" y1="862.7" x2="1670" y2="862.7" stroke="#dddbd8" stroke-width="1" /><line x1="794.6" y1="899.2" x2="1670" y2="899.2" stroke="#dddbd8" stroke-width="1" /><line x1="794.6" y1="935.5" x2="1670" y2="935.5" stroke="#dddbd8" stroke-width="1" /><line x1="794.6" y1="971.5" x2="1670" y2="971.5" stroke="#dddbd8" stroke-width="1" /><line x1="794.6" y1="1007.7" x2="1670" y2="1007.7" stroke="#dddbd8" stroke-width="1" /><line x1="524.5" y1="1007.7" x2="794.6" y2="1007.7" stroke="#dddbd8" stroke-width="1" /><rect x="233.5" y="746.5" width="1452.5" height="269.5" fill="none" stroke="#dddbd8" stroke-width="1"/><rect x="1674.8" y="828.6" width="6.4" height="16.7" fill="#b5b5b5" rx="3.2"/><text x="247.1" y="816" font-size="17.9" font-weight="700" fill="#161513" text-anchor="start" font-family="'Liberation Sans', sans-serif" >Predicted Supplier Risk Decile</text><path d="M508.6 809.2 H519.8 L514.2 815.6 Z" fill="#3a3a3a"/><text x="538.1" y="816" font-size="17.9" font-weight="700" fill="#161513" text-anchor="start" font-family="'Liberation Sans', sans-serif" >Supplier</text><text x="808.3" y="816" font-size="17.9" font-weight="700" fill="#161513" text-anchor="start" font-family="'Liberation Sans', sans-serif" >Payment Terms Name</text><text x="1023.5" y="816" font-size="17.9" font-weight="700" fill="#161513" text-anchor="start" font-family="'Liberation Sans', sans-serif" >Transaction Type Name</text><text x="1309" y="772.2" font-size="17.9" font-weight="700" fill="#161513" text-anchor="middle" font-family="'Liberation Sans', sans-serif" >Overdue</text><text x="1309" y="793.9" font-size="17.9" font-weight="700" fill="#161513" text-anchor="middle" font-family="'Liberation Sans', sans-serif" >Invoices</text><text x="1309" y="815.7" font-size="17.9" font-weight="700" fill="#161513" text-anchor="middle" font-family="'Liberation Sans', sans-serif" >Count</text><text x="1451.5" y="772.2" font-size="17.9" font-weight="700" fill="#161513" text-anchor="middle" font-family="'Liberation Sans', sans-serif" >Avg Invoice</text><text x="1451.5" y="793.9" font-size="17.9" font-weight="700" fill="#161513" text-anchor="middle" font-family="'Liberation Sans', sans-serif" >Days</text><text x="1451.5" y="815.7" font-size="17.9" font-weight="700" fill="#161513" text-anchor="middle" font-family="'Liberation Sans', sans-serif" >Overdue</text><text x="1596.8" y="793.9" font-size="17.9" font-weight="700" fill="#161513" text-anchor="middle" font-family="'Liberation Sans', sans-serif" >Overdue Amt</text><text x="247.1" y="851.1" font-size="17.9" font-weight="700" fill="#161513" text-anchor="start" font-family="'Liberation Sans', sans-serif" >10</text><text x="538.1" y="851.0" font-size="17.9" font-weight="700" fill="#161513" text-anchor="start" font-family="'Liberation Sans', sans-serif" >Advanced Corp</text><text x="808.3" y="850.6999999999999" font-size="17.9" font-weight="700" fill="#161513" text-anchor="start" font-family="'Liberation Sans', sans-serif" >Immediate</text><text x="1023.5" y="851.9" font-size="17.9" font-weight="700" fill="#161513" text-anchor="start" font-family="'Liberation Sans', sans-serif" >Standard</text><text x="1366" y="852.1999999999999" font-size="18.4" font-weight="400" fill="#3b3b3b" text-anchor="end" font-family="'Liberation Sans', sans-serif" >632</text><text x="1510.2" y="852.1999999999999" font-size="18.4" font-weight="400" fill="#3b3b3b" text-anchor="end" font-family="'Liberation Sans', sans-serif" >1,255.40</text><text x="1656" y="852.1999999999999" font-size="18.4" font-weight="400" fill="#3b3b3b" text-anchor="end" font-family="'Liberation Sans', sans-serif" >$3,558,965.66</text><text x="808.3" y="888.1" font-size="17.9" font-weight="700" fill="#161513" text-anchor="start" font-family="'Liberation Sans', sans-serif" >JP-EOM-1-EOM</text><text x="1023.5" y="888.1" font-size="17.9" font-weight="700" fill="#161513" text-anchor="start" font-family="'Liberation Sans', sans-serif" >Standard</text><text x="1366" y="888.4" font-size="18.4" font-weight="400" fill="#3b3b3b" text-anchor="end" font-family="'Liberation Sans', sans-serif" >1</text><text x="1510.2" y="888.4" font-size="18.4" font-weight="400" fill="#3b3b3b" text-anchor="end" font-family="'Liberation Sans', sans-serif" >2,161.00</text><text x="1656" y="888.4" font-size="18.4" font-weight="400" fill="#3b3b3b" text-anchor="end" font-family="'Liberation Sans', sans-serif" >$7,041.60</text><text x="808.3" y="924.3" font-size="17.9" font-weight="700" fill="#161513" text-anchor="start" font-family="'Liberation Sans', sans-serif" >Net 30</text><text x="1023.5" y="924.3" font-size="17.9" font-weight="700" fill="#161513" text-anchor="start" font-family="'Liberation Sans', sans-serif" >Standard</text><text x="1366" y="924.5999999999999" font-size="18.4" font-weight="400" fill="#3b3b3b" text-anchor="end" font-family="'Liberation Sans', sans-serif" >345</text><text x="1510.2" y="924.5999999999999" font-size="18.4" font-weight="400" fill="#3b3b3b" text-anchor="end" font-family="'Liberation Sans', sans-serif" >2,115.22</text><text x="1656" y="924.5999999999999" font-size="18.4" font-weight="400" fill="#3b3b3b" text-anchor="end" font-family="'Liberation Sans', sans-serif" >$509,789.60</text><text x="808.3" y="960.5" font-size="17.9" font-weight="700" fill="#161513" text-anchor="start" font-family="'Liberation Sans', sans-serif" >Net 45</text><text x="1023.5" y="960.5" font-size="17.9" font-weight="700" fill="#161513" text-anchor="start" font-family="'Liberation Sans', sans-serif" >Standard</text><text x="1366" y="960.8" font-size="18.4" font-weight="400" fill="#3b3b3b" text-anchor="end" font-family="'Liberation Sans', sans-serif" >20</text><text x="1510.2" y="960.8" font-size="18.4" font-weight="400" fill="#3b3b3b" text-anchor="end" font-family="'Liberation Sans', sans-serif" >231.30</text><text x="1656" y="960.8" font-size="18.4" font-weight="400" fill="#3b3b3b" text-anchor="end" font-family="'Liberation Sans', sans-serif" >$508,861.00</text><text x="808.3" y="996.7" font-size="17.9" font-weight="700" fill="#161513" text-anchor="start" font-family="'Liberation Sans', sans-serif" >Net 60</text><text x="1023.5" y="996.7" font-size="17.9" font-weight="700" fill="#161513" text-anchor="start" font-family="'Liberation Sans', sans-serif" >Standard</text><text x="1366" y="997.0" font-size="18.4" font-weight="400" fill="#3b3b3b" text-anchor="end" font-family="'Liberation Sans', sans-serif" >17</text><text x="1510.2" y="997.0" font-size="18.4" font-weight="400" fill="#3b3b3b" text-anchor="end" font-family="'Liberation Sans', sans-serif" >130.29</text><text x="1656" y="997.0" font-size="18.4" font-weight="400" fill="#3b3b3b" text-anchor="end" font-family="'Liberation Sans', sans-serif" >$152,837.20</text><line x1="0" y1="1038.3" x2="1920" y2="1038.3" stroke="#dedcd9" stroke-width="1.2" /><text x="14.2" y="1066" font-size="14.95" font-weight="700" fill="#161513" text-anchor="start" font-family="'Liberation Sans', sans-serif" >Supplier Risk Analysis</text><rect x="0" y="1077" width="189" height="3" fill="#5f7d4f" /><text x="218.2" y="1066" font-size="15.3" font-weight="400" fill="#3b3b3b" text-anchor="start" font-family="'Liberation Sans', sans-serif" >Invoice Risk Analysis</text><text x="402.7" y="1066" font-size="15.6" font-weight="400" fill="#3b3b3b" text-anchor="start" font-family="'Liberation Sans', sans-serif" >Model Training Statistics</text><g stroke="#2b2b2b" stroke-width="1.5" fill="none"><circle cx="637.7" cy="1059.8" r="7.8"/><path d="M637.7 1055.3 V1064.3 M633.2 1059.8 H642.2"/></g><g stroke="#b5b5b5" stroke-width="1.4" fill="none"><rect x="1722.5" y="1053.3" width="15.5" height="15.5"/></g><g fill="#b0b0b0"><rect x="1729.35" y="1053.75" width="1.3" height="1.3"/><rect x="1729.35" y="1056.9499999999998" width="1.3" height="1.3"/><rect x="1729.35" y="1060.35" width="1.3" height="1.3"/><rect x="1729.35" y="1063.6499999999999" width="1.3" height="1.3"/><rect x="1729.35" y="1066.9499999999998" width="1.3" height="1.3"/><rect x="1722.55" y="1060.35" width="1.3" height="1.3"/><rect x="1725.9499999999998" y="1060.35" width="1.3" height="1.3"/><rect x="1732.75" y="1060.35" width="1.3" height="1.3"/><rect x="1736.1499999999999" y="1060.35" width="1.3" height="1.3"/></g><path d="M1746 1058 H1757 L1751.5 1065 Z" fill="#b0b0b0"/><g stroke="#549a1f" stroke-width="1.6" fill="none" stroke-linejoin="round"><path d="M1773.8 1053.5 H1786 V1062.8 L1782.2 1064.6 V1068.5 H1777.6 V1064.6 L1773.8 1062.8 Z M1773.8 1060.7 H1786 M1777.8 1053.5 V1058 M1782 1053.5 V1058"/></g><path d="M1813.5 1053.5 L1805.5 1063 H1812 L1811.5 1068.5 L1820 1059 H1813.5 Z" stroke="#549a1f" stroke-width="1.6" fill="none" stroke-linejoin="round"/><line x1="1836.7" y1="1048" x2="1836.7" y2="1070" stroke="#d6d3cf" stroke-width="1.3" /><rect x="1852" y="1052" width="18" height="18" fill="none" stroke="#2f2d2a" stroke-width="2"/><rect x="1852" y="1052" width="6.5" height="18" fill="#2f2d2a"/><rect x="1884.8" y="1052" width="18" height="18" fill="none" stroke="#2f2d2a" stroke-width="2"/><rect x="1890.5" y="1055" width="3.2" height="12" fill="#2f2d2a"/></svg>
</body></html>
